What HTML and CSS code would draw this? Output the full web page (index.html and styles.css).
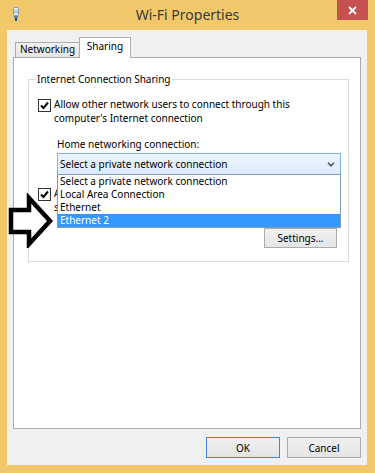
FILE: index.html
```html
<!DOCTYPE html>
<html lang="en">
<head>
  <meta charset="UTF-8">
  <meta name="viewport" content="width=device-width, initial-scale=1.0">
  <title>Wi-Fi Properties</title>
  <link rel="stylesheet" href="styles.css">
</head>
<body>

<div class="window">
  <div class="titlebar">
    <svg class="app-icon" width="8" height="16" viewBox="0 0 8 16">
      <rect x="1.5" y="1.5" width="5" height="8" rx="1" fill="#e8eef4" stroke="#8a9aac"/>
      <line x1="3" y1="3.5" x2="3" y2="7.5" stroke="#9fb0c2"/>
      <line x1="5" y1="3.5" x2="5" y2="7.5" stroke="#9fb0c2"/>
      <rect x="2" y="10" width="4" height="2" fill="#5d7fa8"/>
      <rect x="3" y="12" width="2" height="3" fill="#1d4f8c"/>
    </svg>
    <div class="title">Wi-Fi Properties</div>
    <div class="close">
      <svg width="9" height="9" viewBox="0 0 9 9">
        <path d="M1 1 L8 8 M8 1 L1 8" stroke="#fff" stroke-width="1.8"/>
      </svg>
    </div>
  </div>

  <div class="client">
    <div class="tabs">
      <div class="tab tab-networking">Networking</div>
      <div class="tab tab-sharing active">Sharing</div>
    </div>

    <div class="panel">
      <fieldset class="group">
        <legend>Internet Connection Sharing</legend>

        <div class="check-row">
          <span class="checkbox">
            <svg width="11" height="11" viewBox="0 0 11 11">
              <path d="M2 5.5 L4.5 8 L9 2.5" fill="none" stroke="#000" stroke-width="2"/>
            </svg>
          </span>
          <span class="check-text">Allow other network users to connect through this<br>computer's Internet connection</span>
        </div>

        <div class="field-label">Home networking connection:</div>

        <div class="combo-wrap">
          <div class="combo">
            <span>Select a private network connection</span>
            <svg width="8" height="5" viewBox="0 0 8 5">
              <path d="M1 0.8 L4 3.8 L7 0.8" fill="none" stroke="#4d5866" stroke-width="1.6"/>
            </svg>
          </div>
          <ul class="combo-list">
            <li>Select a private network connection</li>
            <li>Local Area Connection</li>
            <li>Ethernet</li>
            <li class="selected">Ethernet 2</li>
          </ul>
        </div>

        <div class="check-row row-second">
          <span class="checkbox">
            <svg width="11" height="11" viewBox="0 0 11 11">
              <path d="M2 5.5 L4.5 8 L9 2.5" fill="none" stroke="#000" stroke-width="2"/>
            </svg>
          </span>
          <span class="check-text">Allow other network users to control or disable the<br>shared Internet connection</span>
        </div>

        <div class="settings-row">
          <button class="btn">Settings...</button>
        </div>
      </fieldset>
    </div>

    <div class="dialog-buttons">
      <button class="btn btn-default">OK</button>
      <button class="btn">Cancel</button>
    </div>
  </div>

  <!-- Hinweispfeil auf "Ethernet 2" -->
  <svg class="pointer-arrow" width="60" height="56" viewBox="0 0 60 56">
    <path d="M11 18 L29 18 L29 6 L50 29 L29 52 L29 40 L11 40 Z" fill="#fff" stroke="#000" stroke-width="4.5"/>
  </svg>
</div>

</body>
</html>
```

FILE: styles.css
```css
body {
  margin: 0;
  font-family: "Noto Sans", "Open Sans", sans-serif;
  font-size: 10px;
  color: #000;
}

/* Fensterrahmen */
.window {
  position: relative;
  width: 375px;
  height: 473px;
  background: #f1c86a;
  display: flex;
  flex-direction: column;
  overflow: hidden;
}

.titlebar {
  height: 30px;
  display: grid;
  grid-template-columns: 1fr auto 1fr;
  flex-shrink: 0;
}

.app-icon {
  margin: 6px 0 0 12px;
}

.title {
  font-size: 14px;
  line-height: 30px;
  color: #3a3a3a;
}

.close {
  justify-self: end;
  width: 31px;
  height: 20px;
  margin-right: 7px;
  background: #c75050;
  display: flex;
  align-items: center;
  justify-content: center;
}

/* Fensterinhalt */
.client {
  flex: 1;
  margin: 0 8px 8px 7px;
  padding: 7px 6px 0 6px;
  background: #f0f0f0;
  display: flex;
  flex-direction: column;
}

.tabs {
  display: flex;
  align-items: flex-end;
  height: 21px;
  padding-left: 2px;
  margin-bottom: -1px;
  position: relative;
  z-index: 1;
}

.tab {
  box-sizing: border-box;
  border: 1px solid #acacac;
  border-bottom: none;
  text-align: center;
}

.tab-networking {
  width: 65px;
  height: 15px;
  margin-bottom: 1px;
  line-height: 13px;
  background: linear-gradient(#f2f2f2, #e5e5e5);
}

.tab-sharing {
  width: 52px;
  height: 21px;
  margin-left: -1px;
  line-height: 16px;
  background: #fff;
}

.panel {
  box-sizing: border-box;
  height: 372px;
  background: #fff;
  border: 1px solid #acacac;
}

/* Gruppenrahmen */
.group {
  margin: 14px 11px 0 14px;
  padding: 11px 0 13px 9px;
  border: 1px solid #dcdcdc;
}

.group legend {
  padding: 0 1px;
  margin-left: -2px;
  line-height: 14px;
}

.check-row {
  display: flex;
  gap: 3px;
  line-height: 14px;
}

.checkbox {
  box-sizing: border-box;
  width: 13px;
  height: 13px;
  margin-top: 2px;
  border: 1px solid #333;
  background: #fff;
  flex-shrink: 0;
  display: flex;
}

.field-label {
  margin-top: 12px;
  padding-left: 19px;
  line-height: 14px;
}

.combo-wrap {
  position: relative;
  margin: 2px 7px 0 19px;
  z-index: 2;
}

.combo {
  box-sizing: border-box;
  height: 22px;
  padding: 0 5px 0 2px;
  border: 1px solid #7eb4ea;
  background: linear-gradient(#ecf4fc, #dcecfc);
  display: flex;
  align-items: center;
  justify-content: space-between;
}

.combo-list {
  position: absolute;
  left: 0;
  right: 0;
  top: calc(100% - 1px);
  margin: 0;
  padding: 0;
  list-style: none;
  background: #fff;
  border: 1px solid #7f9db9;
}

.combo-list li {
  height: 13px;
  line-height: 13px;
  padding-left: 2px;
}

.combo-list .selected {
  background: #3399ff;
  color: #fff;
}

.row-second {
  margin-top: 11px;
}

.settings-row {
  display: flex;
  justify-content: flex-end;
  margin: 14px 11px 0 0;
}

.btn {
  box-sizing: border-box;
  width: 73px;
  height: 20px;
  padding: 0;
  font: inherit;
  color: #000;
  border: 1px solid #acacac;
  background: linear-gradient(#f0f0f0, #e5e5e5);
}

.dialog-buttons {
  display: flex;
  justify-content: flex-end;
  gap: 7px;
  margin-top: 8px;
}

.dialog-buttons .btn {
  width: 74px;
  height: 21px;
}

.btn-default {
  border-color: #3c8ad6;
}

/* Pfeil liegt über dem Dialog */
.pointer-arrow {
  position: absolute;
  left: 0;
  top: 192px;
}
```
